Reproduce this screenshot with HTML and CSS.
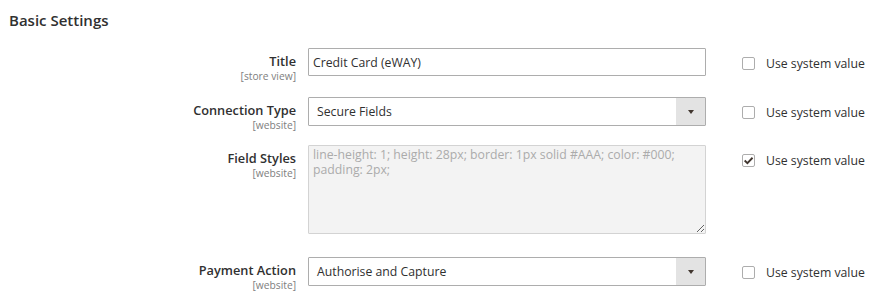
FILE: index.html
```html
<!DOCTYPE html>
<html>
<head>
<meta charset="utf-8">
<link rel="stylesheet" href="styles.css">
</head>
<body>
<div class="section">
  <h2 class="section-title">Basic Settings</h2>
  <div class="rows">
    <div class="row">
      <div class="label"><span class="name">Title</span><span class="scope">[store view]</span></div>
      <div class="control"><input class="text-input" type="text" value="Credit Card (eWAY)"></div>
      <label class="use-default"><span class="box"></span><span class="use-text">Use system value</span></label>
    </div>
    <div class="row">
      <div class="label"><span class="name">Connection Type</span><span class="scope">[website]</span></div>
      <div class="control"><div class="select"><span class="select-value">Secure Fields</span><span class="select-btn"><span class="arrow"></span></span></div></div>
      <label class="use-default"><span class="box"></span><span class="use-text">Use system value</span></label>
    </div>
    <div class="row">
      <div class="label"><span class="name">Field Styles</span><span class="scope">[website]</span></div>
      <div class="control"><textarea class="area" disabled placeholder="line-height: 1; height: 28px; border: 1px solid #AAA; color: #000; padding: 2px;"></textarea></div>
      <label class="use-default"><span class="box checked"><svg viewBox="0 0 12 12" width="11" height="11"><path d="M1.8 6 L4.8 8.9 L10.4 3" fill="none" stroke="#41362f" stroke-width="2"/></svg></span><span class="use-text">Use system value</span></label>
    </div>
    <div class="row">
      <div class="label"><span class="name">Payment Action</span><span class="scope">[website]</span></div>
      <div class="control"><div class="select"><span class="select-value">Authorise and Capture</span><span class="select-btn"><span class="arrow"></span></span></div></div>
      <label class="use-default"><span class="box"></span><span class="use-text">Use system value</span></label>
    </div>
  </div>
</div>
</body>
</html>
```
FILE: styles.css
```css
html, body {
  margin: 0;
  padding: 0;
  background: #fff;
}
body {
  font-family: "Open Sans", "Liberation Sans", sans-serif;
  color: #303030;
  font-size: 12.25px;
  min-height: 298px;
}
.section {
  padding: 10px 0 0 9px;
}
.section-title {
  margin: 0;
  font-size: 15px;
  font-weight: 600;
  line-height: 20px;
  color: #303030;
}
.rows {
  margin-top: 18px;
  display: flex;
  flex-direction: column;
  gap: 20px;
}
.row {
  display: grid;
  grid-template-columns: 287px 398px auto;
  column-gap: 12px;
  align-items: start;
}
.row:nth-child(3) { margin-top: -1px; }
.row:nth-child(4) { margin-top: 3px; }
.label {
  height: 28px;
  overflow: visible;
  display: flex;
  flex-direction: column;
  align-items: flex-end;
  text-align: right;
  padding-top: 4px;
  box-sizing: border-box;
}
.name {
  flex-shrink: 0;
  font-weight: 600;
  font-size: 12.75px;
  line-height: 18px;
  color: #303030;
  white-space: nowrap;
}
.scope {
  flex-shrink: 0;
  margin-top: -1px;
  font-size: 10.25px;
  line-height: 14px;
  color: #808080;
  white-space: nowrap;
}
.control {
  display: flex;
}
.text-input {
  box-sizing: border-box;
  width: 398px;
  height: 28px;
  border: 1px solid #adadad;
  border-radius: 1px;
  margin: 0;
  padding: 0 4px;
  font-family: inherit;
  font-size: 12.25px;
  color: #303030;
  outline: none;
}
.select {
  box-sizing: border-box;
  width: 398px;
  height: 29px;
  border: 1px solid #adadad;
  border-radius: 1px;
  display: flex;
  align-items: stretch;
}
.select-value {
  flex: 1;
  padding-left: 8px;
  font-size: 12.25px;
  line-height: 27px;
  color: #303030;
}
.select-btn {
  width: 29px;
  background: #e3e3e3;
  display: flex;
  align-items: center;
  justify-content: center;
}
.arrow {
  width: 0;
  height: 0;
  border-left: 3px solid transparent;
  border-right: 3px solid transparent;
  border-top: 4px solid #41362f;
  margin-left: 1px;
}
.area {
  box-sizing: border-box;
  width: 398px;
  height: 89px;
  margin: 0;
  border: 1px solid #d3d3d3;
  border-radius: 1px;
  background: #f3f3f3;
  padding: 1px 4px;
  font-family: inherit;
  font-size: 12.25px;
  line-height: 15px;
  color: #a8a8a8;
  resize: both;
}
.area::placeholder {
  color: #ababab;
  opacity: 1;
}
.use-default {
  display: flex;
  align-items: center;
  gap: 11px;
  padding-left: 24px;
  height: 28px;
  margin-top: 1px;
}
.box {
  box-sizing: border-box;
  width: 13px;
  height: 13px;
  border: 1px solid #adadad;
  border-radius: 2px;
  background: #fff;
  display: flex;
  align-items: center;
  justify-content: center;
}
.box svg { display: block; }
.use-text {
  font-size: 12.25px;
  color: #303030;
}
```
